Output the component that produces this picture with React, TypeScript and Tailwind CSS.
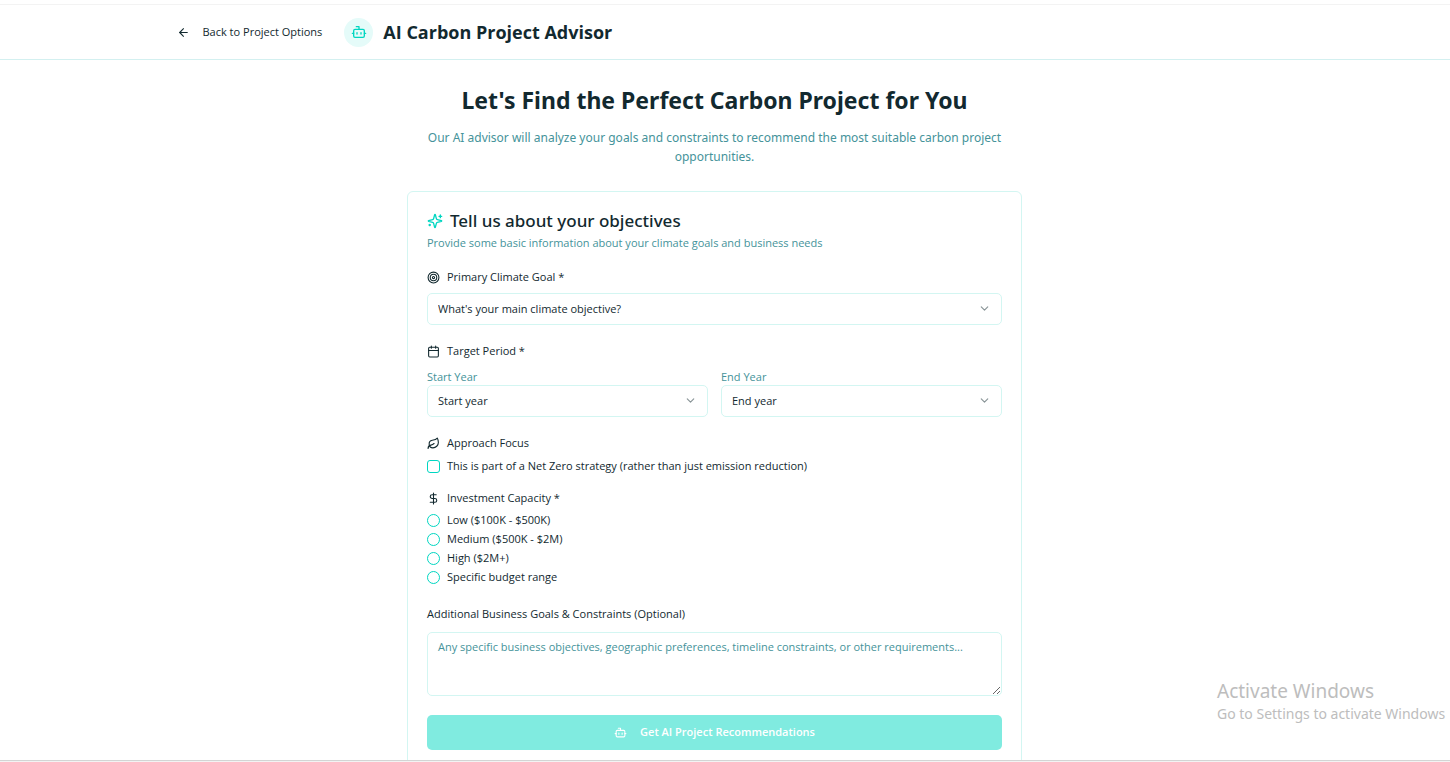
import React from 'react';
import { ArrowLeft, Bot, Calendar, ChevronDown, DollarSign, Leaf, Target } from 'lucide-react';

const investmentOptions = [
  { value: 'low', label: 'Low ($100K - $500K)' },
  { value: 'medium', label: 'Medium ($500K - $2M)' },
  { value: 'high', label: 'High ($2M+)' },
  { value: 'specific', label: 'Specific budget range' },
];

const years = ['2025', '2026', '2027', '2028', '2029', '2030'];

const SparklesIcon: React.FC<{ className?: string }> = ({ className }) => (
  <svg
    viewBox="0 0 24 24"
    fill="none"
    stroke="currentColor"
    strokeWidth="2"
    strokeLinecap="round"
    strokeLinejoin="round"
    className={className}
    aria-hidden="true"
  >
    <path d="M9.937 15.5A2 2 0 0 0 8.5 14.063l-6.135-1.582a.5.5 0 0 1 0-.962L8.5 9.936A2 2 0 0 0 9.937 8.5l1.582-6.135a.5.5 0 0 1 .963 0L14.063 8.5A2 2 0 0 0 15.5 9.937l6.135 1.581a.5.5 0 0 1 0 .964L15.5 14.063a2 2 0 0 0-1.437 1.437l-1.582 6.135a.5.5 0 0 1-.963 0z" />
    <path d="M20 3v4" />
    <path d="M22 5h-4" />
    <path d="M4 17v2" />
    <path d="M5 18H3" />
  </svg>
);

type SelectFieldProps = {
  id: string;
  placeholder: string;
  options: string[];
};

const SelectField: React.FC<SelectFieldProps> = ({ id, placeholder, options }) => (
  <div className="relative">
    <select
      id={id}
      defaultValue=""
      className="block w-full h-8 appearance-none rounded-[5px] border border-[#d3f6f2] bg-white pl-[10px] pr-8 text-[11px] text-[#12292f]"
    >
      <option value="">{placeholder}</option>
      {options.map((option) => (
        <option key={option} value={option}>
          {option}
        </option>
      ))}
    </select>
    <ChevronDown className="pointer-events-none absolute right-[11px] top-[9px] w-[13px] h-[13px] opacity-50" />
  </div>
);

type FieldLabelProps = {
  icon: React.ReactNode;
  htmlFor?: string;
  children: React.ReactNode;
};

const FieldLabel: React.FC<FieldLabelProps> = ({ icon, htmlFor, children }) => (
  <label htmlFor={htmlFor} className="flex items-center gap-[7px] text-[11px] leading-4 font-medium">
    {icon}
    {children}
  </label>
);

const Header: React.FC = () => (
  <header className="flex min-h-[55px] shrink-0 items-center border-b border-[#d3f0f0] pr-[21px]">
    <div className="mx-auto flex w-full max-w-[1120px] items-center gap-3 px-3">
      <button className="flex h-7 items-center gap-[13px] px-[10px] text-[11px] font-medium">
        <ArrowLeft className="w-[13px] h-[13px]" />
        Back to Project Options
      </button>
      <div className="flex items-center gap-[10px]">
        <div className="flex w-[29px] h-[29px] items-center justify-center rounded-full bg-[#e5fbf9]">
          <Bot className="w-4 h-4 text-[#00d6c1]" />
        </div>
        <h1 className="text-[18px] leading-6 font-bold">AI Carbon Project Advisor</h1>
      </div>
    </div>
  </header>
);

const AdvisorForm: React.FC = () => (
  <form className="rounded-md border border-[#d3f6f2] px-[19px] pt-[17px] pb-5">
    <h3 className="flex items-center gap-[7px] font-['Noto_Sans',sans-serif] text-[17px] leading-6 font-medium">
      <SparklesIcon className="w-4 h-4 text-[#00d6c1]" />
      Tell us about your objectives
    </h3>
    <p className="mt-[2px] text-[11px] leading-4 text-[#45939a]">
      Provide some basic information about your climate goals and business needs
    </p>

    <div className="mt-[18px] flex flex-col gap-2">
      <FieldLabel htmlFor="goal" icon={<Target className="w-[13px] h-[13px]" />}>
        Primary Climate Goal *
      </FieldLabel>
      <SelectField
        id="goal"
        placeholder="What's your main climate objective?"
        options={['Carbon neutrality', 'Net zero', 'Emission reduction']}
      />
    </div>

    <div className="mt-[18px]">
      <FieldLabel htmlFor="start-year" icon={<Calendar className="w-[13px] h-[13px]" />}>
        Target Period *
      </FieldLabel>
      <div className="mt-[10px] grid grid-cols-2 gap-[13px]">
        <div>
          <label htmlFor="start-year" className="block text-[11px] leading-4 font-medium text-[#45939a]">
            Start Year
          </label>
          <SelectField id="start-year" placeholder="Start year" options={years} />
        </div>
        <div>
          <label htmlFor="end-year" className="block text-[11px] leading-4 font-medium text-[#45939a]">
            End Year
          </label>
          <SelectField id="end-year" placeholder="End year" options={years} />
        </div>
      </div>
    </div>

    <div className="mt-[18px] flex flex-col gap-[7px]">
      <FieldLabel htmlFor="net-zero" icon={<Leaf className="w-[13px] h-[13px]" />}>
        Approach Focus
      </FieldLabel>
      <label className="flex items-center gap-[7px] text-[11px] leading-4 font-medium">
        <input
          id="net-zero"
          type="checkbox"
          className="w-[13px] h-[13px] appearance-none rounded-[3px] border border-[#00d6c1] checked:bg-[#00d6c1]"
        />
        This is part of a Net Zero strategy (rather than just emission reduction)
      </label>
    </div>

    <fieldset className="mt-4">
      <legend className="mb-[6px]">
        <span className="flex items-center gap-[7px] text-[11px] leading-4 font-medium">
          <DollarSign className="w-[13px] h-[13px]" />
          Investment Capacity *
        </span>
      </legend>
      <div className="flex flex-col gap-[3px]">
        {investmentOptions.map((option) => (
          <label key={option.value} className="flex items-center gap-[7px] text-[11px] leading-4 font-medium">
            <input
              type="radio"
              name="investment"
              value={option.value}
              className="w-[13px] h-[13px] appearance-none rounded-full border border-[#00d6c1] checked:bg-[#00d6c1]"
            />
            {option.label}
          </label>
        ))}
      </div>
    </fieldset>

    <div className="mt-[21px]">
      <label htmlFor="notes" className="block text-[11px] leading-4 font-medium">
        Additional Business Goals &amp; Constraints (Optional)
      </label>
      <textarea
        id="notes"
        placeholder="Any specific business objectives, geographic preferences, timeline constraints, or other requirements..."
        className="mt-[10px] block w-full h-16 rounded-[5px] border border-[#d3f6f2] px-[10px] py-[6px] text-[11px] leading-4 placeholder:text-[#45939a]"
      />
    </div>

    <button
      type="button"
      disabled
      className="mt-[19px] flex h-[35px] w-full items-center justify-center gap-[13px] rounded-[5px] bg-[#80ebe0] text-[11px] font-semibold text-white"
    >
      <Bot className="w-[13px] h-[13px]" />
      Get AI Project Recommendations
    </button>
  </form>
);

export default function App() {
  return (
    <div className="relative flex h-screen flex-col overflow-hidden bg-white font-['Open_Sans','Noto_Sans',sans-serif] text-[#12292f]">
      <div className="h-[5px] shrink-0 border-b border-[#f3f3f3]" />
      <Header />
      <main className="min-h-0 flex-1 overflow-y-auto pr-[21px] [scrollbar-width:none]">
        <div className="mx-auto w-full max-w-[615px] pt-6 pb-6">
          <div className="mb-[25px] text-center font-['Noto_Sans',sans-serif]">
            <h2 className="text-[23px] leading-8 font-bold">Let's Find the Perfect Carbon Project for You</h2>
            <p className="mt-3 px-4 text-[12px] leading-[19px] text-[#45939a]">
              Our AI advisor will analyze your goals and constraints to recommend the most suitable carbon project
              opportunities.
            </p>
          </div>
          <AdvisorForm />
        </div>
      </main>
      <div className="h-[2px] shrink-0 border-t border-[#d4d4d4] bg-[#f3f3f3]" />
      <div className="pointer-events-none absolute right-0 bottom-[37px] w-[233px] font-['Noto_Sans',sans-serif] whitespace-nowrap text-[#bdbdbd]">
        <p className="text-[19px] leading-6">Activate Windows</p>
        <p className="text-[14px] leading-[22px]">Go to Settings to activate Windows</p>
      </div>
    </div>
  );
}
